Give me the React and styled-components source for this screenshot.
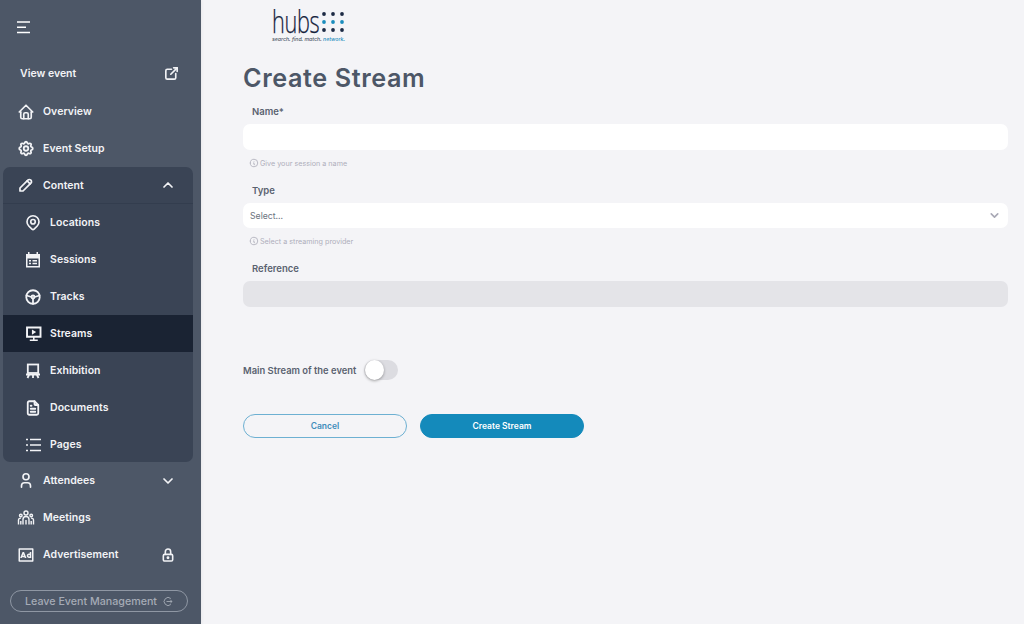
import React from 'react';
import styled, { createGlobalStyle } from 'styled-components';
import {
  TbHome, TbSettings, TbPencil, TbMapPin, TbSteeringWheel, TbFileText,
  TbChevronUp, TbChevronDown, TbLock, TbUser, TbExternalLink, TbInfoCircle,
} from 'react-icons/tb';
import { RiAdvertisementLine } from 'react-icons/ri';

const GlobalStyle = createGlobalStyle`
  html, body { margin: 0; padding: 0; height: 100%; overflow: hidden; }
  body { background: #f4f4f7; font-family: Inter, "Open Sans", sans-serif; }
  * { box-sizing: border-box; }
`;

const Page = styled.div`
  display: flex;
  width: 1024px;
  height: 624px;
`;

const Sidebar = styled.aside`
  width: 201px;
  flex: none;
  height: 624px;
  background: #4d5767;
  color: #f2f3f6;
  display: flex;
  flex-direction: column;
  padding: 0 8px 0 3px;
  box-shadow: 1px 0 3px rgba(0, 0, 0, 0.05);
`;

const Burger = styled.button`
  background: none;
  border: 0;
  padding: 0;
  margin: 21px 0 0 14px;
  width: 14px;
  height: 13px;
  display: flex;
  color: #fff;
`;

const ViewEvent = styled.div`
  display: flex;
  align-items: center;
  justify-content: space-between;
  height: 37px;
  margin: 21px 0 1px;
  padding: 0 13px 0 17px;
  font-size: 10.5px;
  font-weight: 600;
`;

const Row = styled.div`
  display: flex;
  align-items: center;
  height: 37px;
  padding-left: ${({ $sub }) => ($sub ? '21px' : '14px')};
  padding-right: 17px;
  font-size: 10.5px;
  font-weight: 600;
  letter-spacing: 0.05px;
  background: ${({ $active }) => ($active ? '#1a2333' : 'transparent')};
  border-bottom: ${({ $head }) => ($head ? '1px solid #333d4e' : '0')};
`;

const RowIcon = styled.span`
  width: 18px;
  flex: none;
  display: flex;
  align-items: center;
  justify-content: center;
`;

const RowLabel = styled.span`
  margin-left: 8px;
  flex: 1;
  white-space: nowrap;
`;

const ContentGroup = styled.div`
  background: #3a4455;
  border-radius: 7px;
  height: 295px;
  overflow: hidden;
`;

const LeaveButton = styled.button`
  margin: 17px 0 0 7px;
  width: 178px;
  height: 22px;
  border: 1px solid #8f97a4;
  border-radius: 11px;
  background: transparent;
  color: #a5abb6;
  font: 500 10.7px Inter, sans-serif;
  display: flex;
  align-items: center;
  justify-content: center;
  gap: 5px;
  padding: 0;
`;

const Main = styled.main`
  flex: 1;
  padding: 0 16px 0 42px;
  display: flex;
  flex-direction: column;
`;

const Logo = styled.div`
  margin: 9px 0 0 29px;
  height: 35px;
  width: 72px;
  display: grid;
  grid-template-columns: 50px 22px;
  grid-template-rows: 26px 9px;
`;

const LogoWord = styled.span`
  font: 300 31px/25px "Open Sans", sans-serif;
  color: #15233e;
  transform: scaleX(0.7);
  transform-origin: left center;
  letter-spacing: -0.5px;
  -webkit-text-stroke: 0.25px #15233e;
`;

const LogoDots = styled.svg`
  margin-top: 3px;
`;

const LogoTag = styled.span`
  grid-column: 1 / 3;
  font: italic 500 5.2px/9px Inter, sans-serif;
  color: #4b5465;
  white-space: nowrap;
  em { color: #1b8dbd; }
`;

const Title = styled.h1`
  margin: 19px 0 0;
  font-size: 25.2px;
  line-height: 30px;
  font-weight: 600;
  letter-spacing: 0.6px;
  color: #4d5767;
`;

const Label = styled.label`
  display: block;
  margin: ${({ $first }) => ($first ? '12px' : '15px')} 0 0 9px;
  height: 14px;
  font-size: 9.5px;
  line-height: 14px;
  font-weight: 600;
  color: #5a6270;
`;

const Field = styled.div`
  margin-top: 5px;
  height: ${({ $select }) => ($select ? '25px' : '26px')};
  border-radius: 7px;
  background: ${({ $disabled }) => ($disabled ? '#e4e4e8' : '#fff')};
  display: flex;
  align-items: center;
  justify-content: space-between;
  padding: 0 7px;
  font-size: 8.7px;
  color: #6d7480;
`;

const Hint = styled.div`
  margin: 7px 0 0 6px;
  height: 12px;
  display: flex;
  align-items: center;
  gap: 1px;
  font-size: 7.2px;
  color: #aeaebb;
`;

const SwitchRow = styled.div`
  margin-top: 52px;
  height: 22px;
  display: flex;
  align-items: center;
  gap: 8px;
  font-size: 9.4px;
  font-weight: 600;
  color: #5a6270;
`;

const Track = styled.div`
  width: 34px;
  height: 20px;
  border-radius: 10px;
  background: #dcdce1;
  position: relative;
`;

const Knob = styled.div`
  position: absolute;
  left: 1px;
  top: 0;
  width: 19px;
  height: 20px;
  border-radius: 50%;
  background: #fff;
  box-shadow: 0 1px 3px rgba(0, 0, 0, 0.35);
`;

const Actions = styled.div`
  margin-top: 33px;
  display: flex;
  gap: 13px;
`;

const Button = styled.button`
  width: 164px;
  height: 24px;
  border-radius: 12px;
  border: 1px solid ${({ $primary }) => ($primary ? '#148abb' : '#6db0d2')};
  background: ${({ $primary }) => ($primary ? '#148abb' : 'transparent')};
  color: ${({ $primary }) => ($primary ? '#fff' : '#3f8dbb')};
  font: 600 8.5px Inter, sans-serif;
  padding: 0;
`;

const BurgerIcon = () => (
  <svg width="14" height="13" viewBox="0 0 14 13" fill="none" stroke="currentColor" strokeWidth="1.6">
    <path d="M0 1h13M0 6.200h9M0 11.500h13" />
  </svg>
);

const CalendarIcon = () => (
  <svg width="16" height="18" viewBox="1 0 16 18" fill="currentColor">
    <path fillRule="evenodd" d="M4 1h1.500v2h7V1H14v2h2v13.500H2V3h2zM3.500 7.500v7.500h11V7.500zM5 9h2v1.400H5zm3.500 0H13v1.400H8.500zM5 11.800h2v1.400H5zm3.500 0H13v1.400H8.500z" />
  </svg>
);

const StreamIcon = () => (
  <svg width="17" height="17" viewBox="1 1 16 16" fill="currentColor">
    <path fillRule="evenodd" d="M2 2.500h14.500V13H10v1.700h3V16H5.500v-1.300h3V13H2zM3.800 4.200v7h10.900v-7z" />
    <path d="M7.500 5.300 11.500 7.700 7.500 10.200z" />
  </svg>
);

const ExhibitionIcon = () => (
  <svg width="18" height="18" viewBox="0 0 18 18" fill="none" stroke="currentColor" strokeWidth="1.800">
    <rect x="3.800" y="2.500" width="10.400" height="8.500" />
    <path d="M2 12.500h14M5 13l-1.500 3M9 13v3M13 13l1.500 3" />
  </svg>
);

const MeetingsIcon = () => (
  <svg width="18" height="18" viewBox="0 0 18 18" fill="none" stroke="currentColor" strokeWidth="1.400">
    <circle cx="9" cy="4" r="2" />
    <circle cx="3.800" cy="6.500" r="1.300" />
    <circle cx="14.200" cy="6.500" r="1.300" />
    <path d="M6 15.500V10.500a3 3 0 0 1 6 0v5M9 11v4.500M1.500 15.500V11a2 2 0 0 1 2.500-1.800M16.500 15.500V11a2 2 0 0 0-2.500-1.800M3.800 12v3.500M14.200 12v3.500" />
  </svg>
);

const PagesIcon = () => (
  <svg width="15" height="14" viewBox="0 0 15 14" fill="none" stroke="currentColor" strokeWidth="1.500">
    <path d="M4 1.500h11M4 7h11M4 12.500h11M0 1.500h2M0 7h2M0 12.500h2" />
  </svg>
);

const LeaveIcon = () => (
  <svg width="11" height="11" viewBox="0 0 11 11" fill="none" stroke="currentColor" strokeWidth="0.900">
    <path d="M8.800 2.500A4 4 0 1 0 8.800 8.500M4.500 5.500h5.500M8.300 3.800 10 5.500 8.300 7.200" />
  </svg>
);

const navTop = [
  { icon: <TbHome size={20} strokeWidth={2.2} />, label: 'Overview' },
  { icon: <TbSettings size={19} strokeWidth={2.4} />, label: 'Event Setup' },
];

const navContent = [
  { icon: <TbMapPin size={19} strokeWidth={2.2} />, label: 'Locations' },
  { icon: <CalendarIcon />, label: 'Sessions' },
  { icon: <TbSteeringWheel size={18} strokeWidth={2.4} />, label: 'Tracks' },
  { icon: <StreamIcon />, label: 'Streams', active: true },
  { icon: <ExhibitionIcon />, label: 'Exhibition' },
  { icon: <TbFileText size={18} strokeWidth={2.4} />, label: 'Documents' },
  { icon: <PagesIcon />, label: 'Pages' },
];

export default function App() {
  return (
    <Page>
      <GlobalStyle />
      <Sidebar>
        <Burger aria-label="Menu"><BurgerIcon /></Burger>
        <ViewEvent>
          View event
          <TbExternalLink size={17} strokeWidth={2.3} />
        </ViewEvent>
        {navTop.map((item) => (
          <Row key={item.label}>
            <RowIcon>{item.icon}</RowIcon>
            <RowLabel>{item.label}</RowLabel>
          </Row>
        ))}
        <ContentGroup>
          <Row $head>
            <RowIcon><TbPencil size={18} strokeWidth={2.3} /></RowIcon>
            <RowLabel>Content</RowLabel>
            <TbChevronUp size={16} strokeWidth={2.6} />
          </Row>
          {navContent.map((item) => (
            <Row key={item.label} $sub $active={item.active}>
              <RowIcon>{item.icon}</RowIcon>
              <RowLabel>{item.label}</RowLabel>
            </Row>
          ))}
        </ContentGroup>
        <Row>
          <RowIcon><TbUser size={19} strokeWidth={2.2} /></RowIcon>
          <RowLabel>Attendees</RowLabel>
          <TbChevronDown size={16} strokeWidth={2.6} />
        </Row>
        <Row>
          <RowIcon><MeetingsIcon /></RowIcon>
          <RowLabel>Meetings</RowLabel>
        </Row>
        <Row>
          <RowIcon><RiAdvertisementLine size={18} /></RowIcon>
          <RowLabel>Advertisement</RowLabel>
          <TbLock size={16} strokeWidth={2.4} />
        </Row>
        <LeaveButton>
          Leave Event Management
          <LeaveIcon />
        </LeaveButton>
      </Sidebar>
      <Main>
        <Logo>
          <LogoWord>hubs</LogoWord>
          <LogoDots width="22" height="22" viewBox="0 0 22 22">
            {[2, 10, 18].map((y) => [2, 11, 20].map((x) => (
              <circle key={`${x}-${y}`} cx={x} cy={y} r="1.900" fill={y === 10 ? '#1b8dbd' : '#1c2a44'} />
            )))}
          </LogoDots>
          <LogoTag>search. find. match. <em>network.</em></LogoTag>
        </Logo>
        <Title>Create Stream</Title>
        <Label $first>Name*</Label>
        <Field />
        <Hint><TbInfoCircle size={10} /> Give your session a name</Hint>
        <Label>Type</Label>
        <Field $select>
          Select...
          <TbChevronDown size={13} color="#a9a9b6" strokeWidth={3} />
        </Field>
        <Hint><TbInfoCircle size={10} /> Select a streaming provider</Hint>
        <Label>Reference</Label>
        <Field $disabled />
        <SwitchRow>
          Main Stream of the event
          <Track><Knob /></Track>
        </SwitchRow>
        <Actions>
          <Button>Cancel</Button>
          <Button $primary>Create Stream</Button>
        </Actions>
      </Main>
    </Page>
  );
}
